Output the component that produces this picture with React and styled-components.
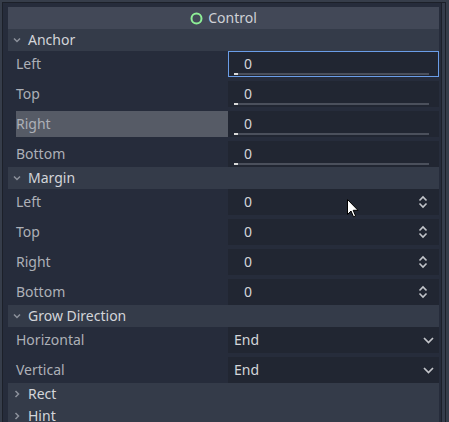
import styled, { createGlobalStyle } from "styled-components";

const GlobalStyle = createGlobalStyle`
  html, body {
    margin: 0;
    height: 100%;
    overflow: hidden;
    background: #363d4a;
    font-family: "Noto Sans", "Open Sans", sans-serif;
    font-size: 14px;
  }
  #root {
    height: 100%;
  }
`;

const anchor = ["Left", "Top", "Right", "Bottom"];
const margin = ["Left", "Top", "Right", "Bottom"];

function Chevron({ open }) {
  return (
    <svg width="8" height="8" viewBox="0 0 8 8">
      {open ? (
        <polyline points="1,2.5 4,5.5 7,2.5" fill="none" stroke="#8c919b" strokeWidth="1.5" />
      ) : (
        <polyline points="2.5,1 5.5,4 2.5,7" fill="none" stroke="#8c919b" strokeWidth="1.5" />
      )}
    </svg>
  );
}

function SpinIcon() {
  return (
    <svg width="10" height="14" viewBox="0 0 10 14">
      <polyline points="1.5,5.5 5,2 8.5,5.5" fill="none" stroke="#c3c5ca" strokeWidth="1.6" />
      <polyline points="1.5,8.5 5,12 8.5,8.5" fill="none" stroke="#c3c5ca" strokeWidth="1.6" />
    </svg>
  );
}

function DropIcon() {
  return (
    <svg width="11" height="7" viewBox="0 0 11 7">
      <polyline points="1,1 5.5,5.5 10,1" fill="none" stroke="#c3c5ca" strokeWidth="1.7" />
    </svg>
  );
}

function Section({ title, open, children }) {
  return (
    <>
      <SectionHeader>
        <Chevron open={open} />
        <span>{title}</span>
      </SectionHeader>
      {open && <Rows>{children}</Rows>}
    </>
  );
}

function App() {
  return (
    <>
      <GlobalStyle />
      <Frame>
        <Panel>
          <Category>
            <svg width="13" height="13" viewBox="0 0 13 13">
              <circle cx="6.5" cy="6.5" r="5" fill="none" stroke="#8eef97" strokeWidth="2" />
            </svg>
            <span>Control</span>
          </Category>
          <Section title="Anchor" open>
            {anchor.map((name, i) => (
              <Row key={name}>
                <Label $hover={name === "Right"}>{name}</Label>
                <Field $focus={i === 0}>
                  <SliderValue>0</SliderValue>
                  <Track>
                    <Grabber />
                  </Track>
                </Field>
              </Row>
            ))}
          </Section>
          <Section title="Margin" open>
            {margin.map((name) => (
              <Row key={name}>
                <Label>{name}</Label>
                <Field $pad={10}>
                  <SpinValue>0</SpinValue>
                  <SpinIcon />
                </Field>
              </Row>
            ))}
          </Section>
          <Section title="Grow Direction" open>
            {["Horizontal", "Vertical"].map((name) => (
              <Row key={name}>
                <Label>{name}</Label>
                <Field $pad={4}>
                  <DropValue>End</DropValue>
                  <DropIcon />
                </Field>
              </Row>
            ))}
          </Section>
          <Section title="Rect" />
          <Section title="Hint" />
        </Panel>
        <Scrollbar />
      </Frame>
      <Cursor width="12" height="19" viewBox="0 0 12 19">
        <path
          d="M0.5,0.5 L0.5,15.5 L4,12 L6.5,17.8 L8.6,16.9 L6.2,11.3 L11,11.3 Z"
          fill="#fff"
          stroke="#000"
          strokeWidth="1"
        />
      </Cursor>
    </>
  );
}

const Frame = styled.div`
  display: flex;
  height: calc(100% - 3px);
  margin: 2px 3px 0 2px;
  border-left: 1px solid #1c2029;
  border-top: 1px solid #1c2029;
  background: #262c3b;
`;

const Panel = styled.div`
  flex: 1;
  display: flex;
  flex-direction: column;
  padding: 4px 2px 0 5px;
  overflow: hidden;
`;

const Scrollbar = styled.div`
  width: 3px;
  border-left: 1px solid #1c2029;
  border-right: 1px solid #1c2029;
  background: #353c4b;
`;

const Category = styled.div`
  flex: none;
  height: 22px;
  box-sizing: border-box;
  padding-bottom: 2px;
  display: flex;
  align-items: center;
  justify-content: center;
  gap: 5px;
  background: #424857;
  color: #cfd1d6;

  svg {
    margin-top: 2px;
  }
`;

const SectionHeader = styled.div`
  flex: none;
  height: 22px;
  box-sizing: border-box;
  padding: 0 0 2px 5px;
  display: flex;
  align-items: center;
  gap: 7px;
  background: #343b49;
  color: #d3d5d9;

  svg {
    margin-top: 2px;
  }
`;

const Rows = styled.div`
  display: flex;
  flex-direction: column;
  gap: 4px;
`;

const Row = styled.div`
  display: flex;
  height: 26px;
  padding-left: 8px;
`;

const Label = styled.div`
  flex: 1;
  display: flex;
  align-items: center;
  box-sizing: border-box;
  padding-bottom: 2px;
  color: #adb0b7;
  background: ${(p) => (p.$hover ? "#565b66" : "transparent")};
`;

const Field = styled.div`
  position: relative;
  width: 211px;
  box-sizing: border-box;
  display: flex;
  align-items: center;
  padding-right: ${(p) => p.$pad || 0}px;
  background: #212632;
  border: 1px solid ${(p) => (p.$focus ? "#6a9de8" : "transparent")};
  color: #d4d6da;
`;

const SliderValue = styled.span`
  padding: 0 0 2px 15px;
`;

const Track = styled.div`
  position: absolute;
  left: 5px;
  right: 9px;
  top: 21px;
  height: 2px;
  background: #4b505c;
`;

const Grabber = styled.div`
  width: 4px;
  height: 2px;
  background: #d8d8d8;
`;

const SpinValue = styled.span`
  flex: 1;
  padding: 0 0 2px 15px;
`;

const DropValue = styled.span`
  flex: 1;
  padding: 0 0 2px 5px;
`;

const Cursor = styled.svg`
  position: absolute;
  left: 347px;
  top: 199px;
`;

export default App;
